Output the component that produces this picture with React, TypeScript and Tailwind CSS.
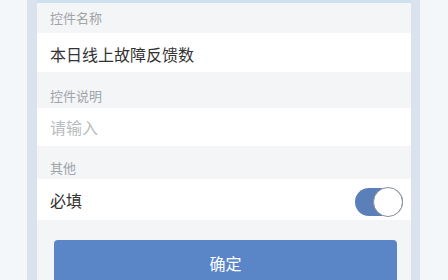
const font = { fontFamily: '"Noto Sans CJK SC", "Liberation Sans", sans-serif' };

function SectionLabel({ children, cls }: { children: string; cls: string }) {
  return (
    <div className={`${cls} shrink-0 flex px-[13px] text-[13px] leading-[14px] text-[#a0a4a8] bg-[#f3f5f7]`}>
      {children}
    </div>
  );
}

function Row({ children, h }: { children: React.ReactNode; h: string }) {
  return <div className={`${h} shrink-0 flex items-center px-[13px] bg-white`}>{children}</div>;
}

export default function App() {
  return (
    <div className="w-[448px] h-[280px] overflow-hidden bg-[#f4f7fa] flex" style={font}>
      <div className="w-[27px] shrink-0" />
      <div className="w-[10px] shrink-0 bg-[#dae3ed]" />
      <div className="w-[374px] shrink-0 flex flex-col bg-[#f3f5f7]">
        <div className="h-[3px] shrink-0 bg-[#cfe0f0]" />
        <SectionLabel cls="h-[30px] items-center">控件名称</SectionLabel>
        <Row h="h-[39px]">
          <span className="text-[16px] text-[#333333] mt-[2px]">本日线上故障反馈数</span>
        </Row>
        <SectionLabel cls="h-[36px] items-end pb-[5px]">控件说明</SectionLabel>
        <Row h="h-[38px]">
          <span className="text-[16px] text-[#b8bcc0]">请输入</span>
        </Row>
        <SectionLabel cls="h-[33px] items-end pb-[4px]">其他</SectionLabel>
        <Row h="h-[41px]">
          <span className="text-[16px] text-[#333333] flex-1">必填</span>
          <div className="w-[48px] h-[28px] mt-[4px] rounded-full bg-[#5a7fb9] relative mr-[-5px]">
            <div className="absolute right-0 top-[-1px] w-[30px] h-[30px] rounded-full bg-white border border-[#8a8f96]" />
          </div>
        </Row>
        <div className="shrink-0 pt-[20px] pl-[17px] pr-[14px]">
          <div className="h-[46px] rounded-[4px] bg-[#5a86c8] flex items-center justify-center text-white text-[16px]">
            确定
          </div>
        </div>
      </div>
      <div className="w-[9px] shrink-0 bg-[#dae3ed]" />
    </div>
  );
}
